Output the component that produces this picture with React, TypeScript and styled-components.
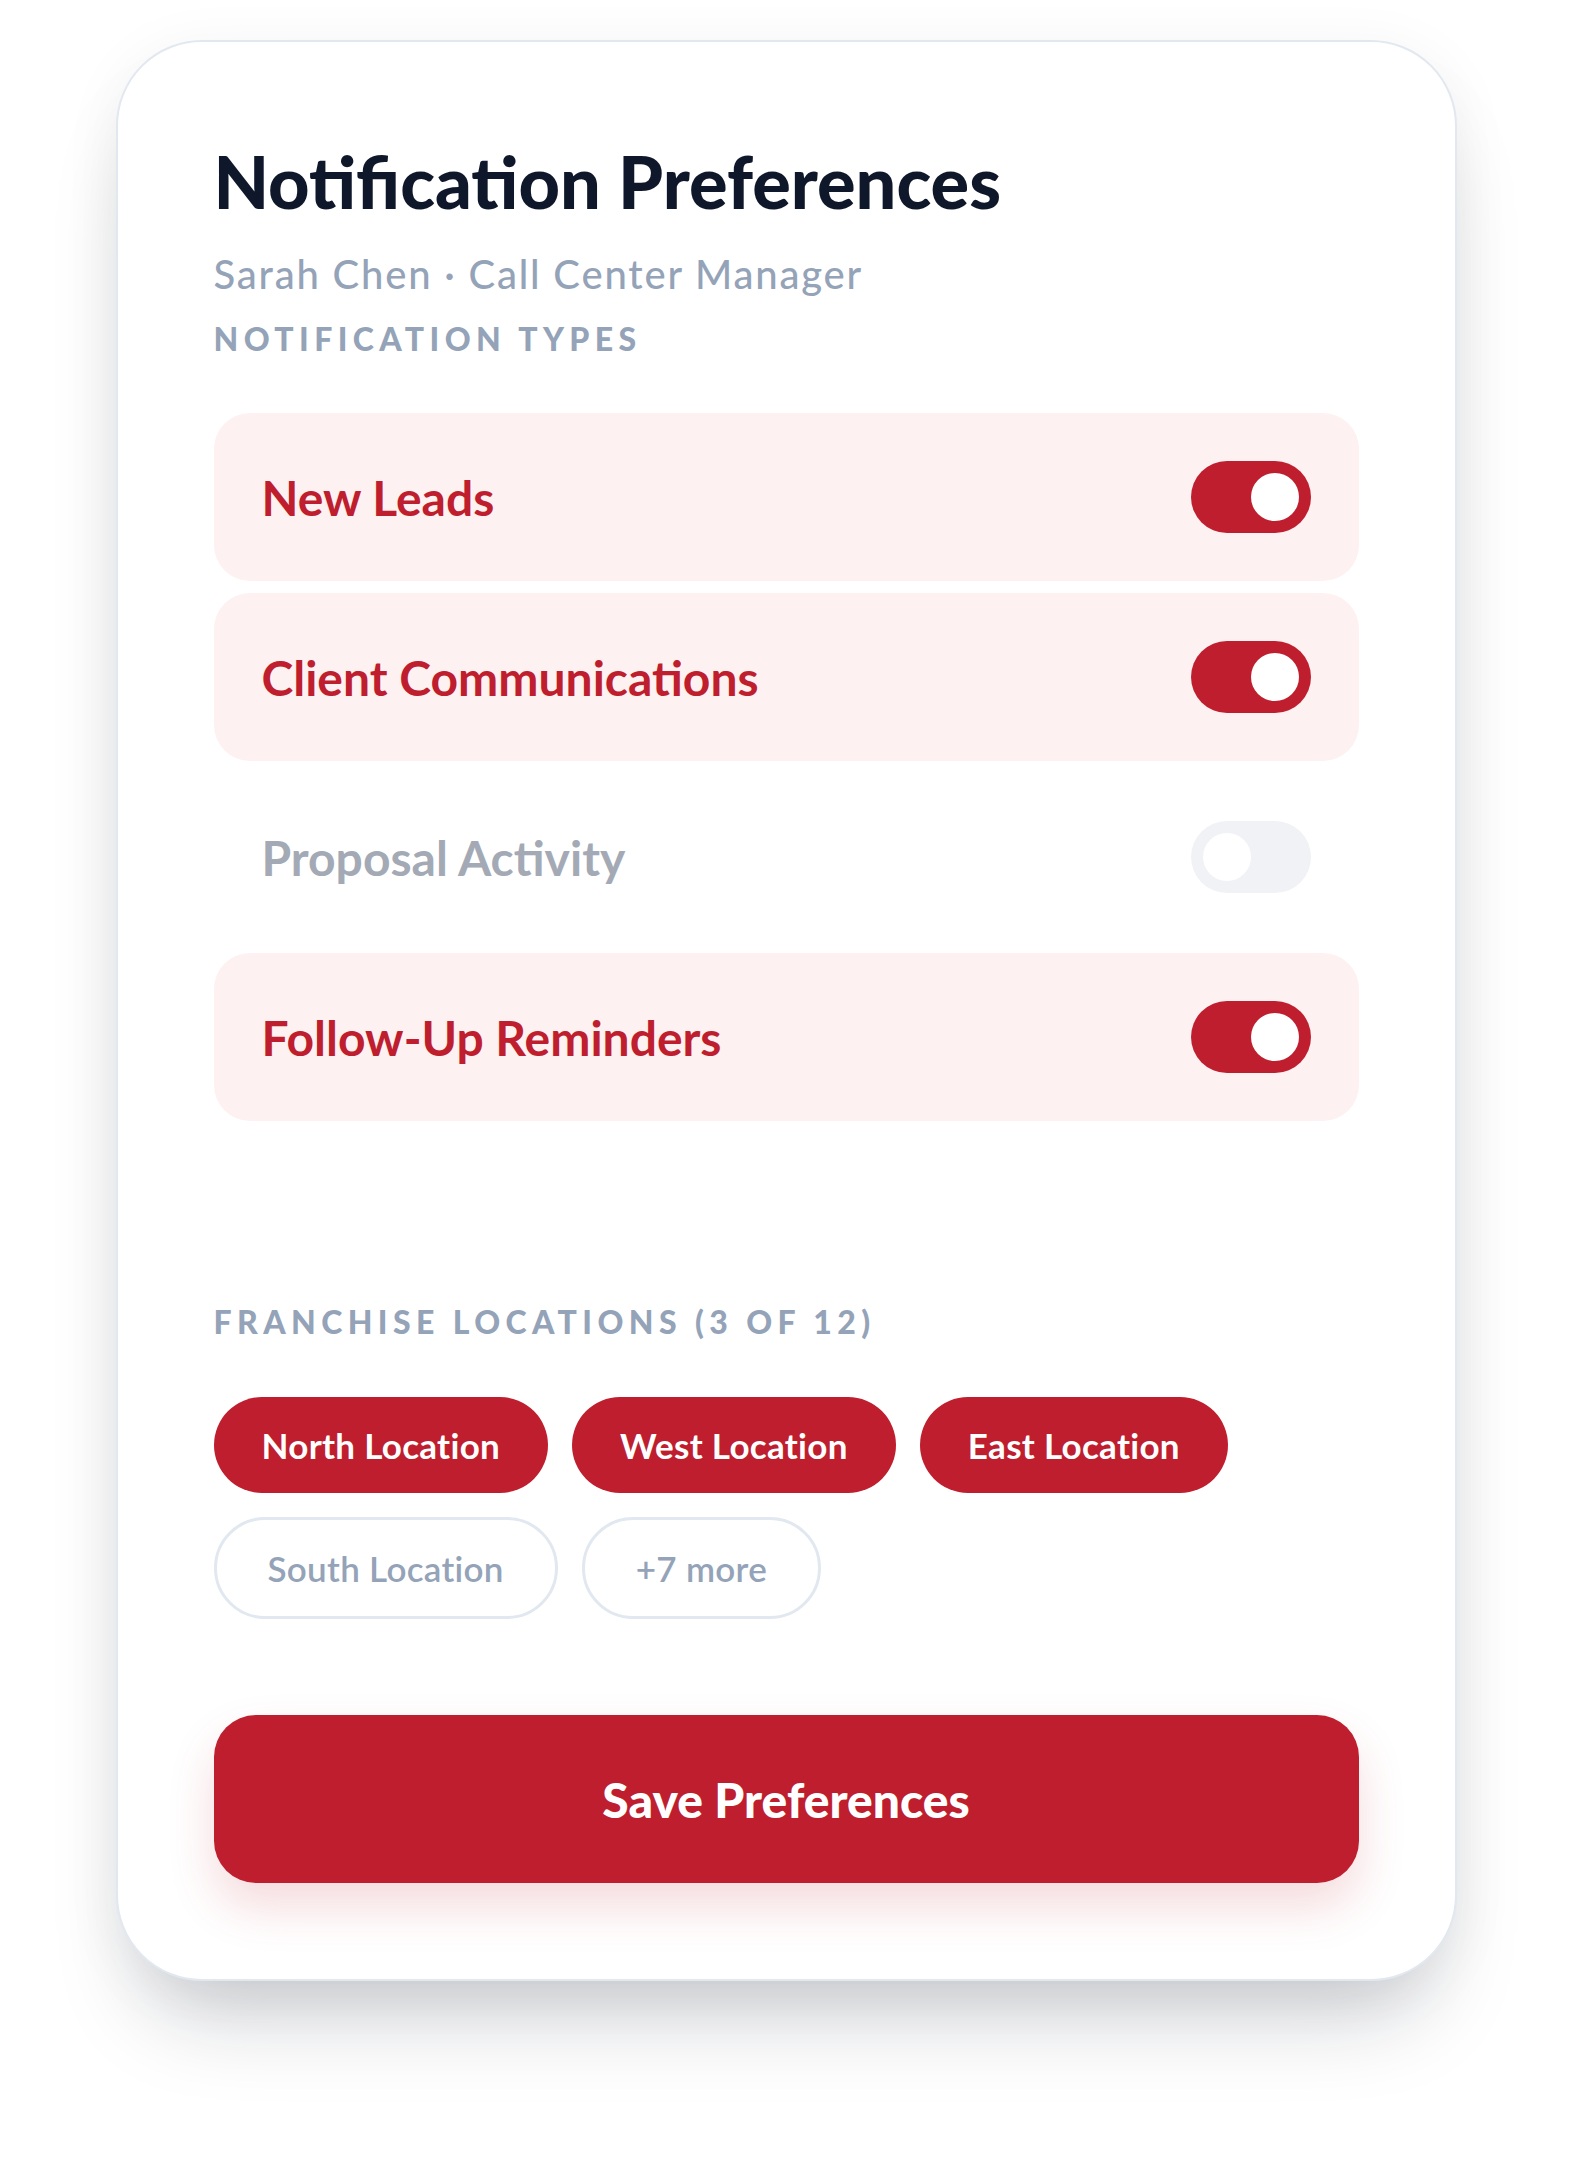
import React, { useState } from "react";
import styled, { createGlobalStyle } from "styled-components";

const GlobalStyle = createGlobalStyle`
  * {
    box-sizing: border-box;
  }
  body {
    margin: 0;
    background: #ffffff;
    font-family: "Lato", "Noto Sans", sans-serif;
  }
`;

const RED = "#be1e2d";
const SLATE = "#94a3b8";

const NOTIFICATION_TYPES = [
  { id: "leads", label: "New Leads", enabled: true },
  { id: "comms", label: "Client Communications", enabled: true },
  { id: "proposal", label: "Proposal Activity", enabled: false },
  { id: "followup", label: "Follow-Up Reminders", enabled: true },
];

const LOCATIONS = [
  { name: "North Location", selected: true },
  { name: "West Location", selected: true },
  { name: "East Location", selected: true },
  { name: "South Location", selected: false },
  { name: "+7 more", selected: false },
];

function App(): JSX.Element {
  const [types, setTypes] = useState(NOTIFICATION_TYPES);

  const toggleType = (id: string): void => {
    setTypes((prev) =>
      prev.map((t) => (t.id === id ? { ...t, enabled: !t.enabled } : t))
    );
  };

  const selectedCount = LOCATIONS.filter((l) => l.selected).length;

  return (
    <Page>
      <GlobalStyle />
      <Card>
        <Title>Notification Preferences</Title>
        <Subtitle>Sarah Chen · Call Center Manager</Subtitle>
        <SectionLabel>Notification Types</SectionLabel>
        <TypeList>
          {types.map((type) => (
            <TypeRow key={type.id} $active={type.enabled}>
              <TypeLabel $active={type.enabled}>{type.label}</TypeLabel>
              <Toggle
                type="button"
                role="switch"
                aria-checked={type.enabled}
                $on={type.enabled}
                onClick={() => toggleType(type.id)}
              >
                <Knob />
              </Toggle>
            </TypeRow>
          ))}
        </TypeList>
        <LocationsLabel>
          Franchise Locations ({selectedCount} of 12)
        </LocationsLabel>
        <ChipList>
          {LOCATIONS.map((loc) => (
            <Chip key={loc.name} type="button" $selected={loc.selected}>
              {loc.name}
            </Chip>
          ))}
        </ChipList>
        <SaveButton type="button">Save Preferences</SaveButton>
      </Card>
    </Page>
  );
}

export default App;

const Page = styled.div`
  min-height: 2174px;
  padding-top: 40px;
`;

const Card = styled.div`
  width: 1341px;
  margin: 0 auto;
  padding: 96px;
  display: flex;
  flex-direction: column;
  background: #ffffff;
  border: 2px solid #e2e8f0;
  border-radius: 86px;
  box-shadow: 0 60px 90px -30px rgba(15, 23, 42, 0.22),
    0 10px 60px rgba(15, 23, 42, 0.06);
`;

const Title = styled.h1`
  margin: 0;
  font-size: 72px;
  line-height: 86px;
  font-weight: 900;
  color: #0f172a;
  letter-spacing: 0;
`;

const Subtitle = styled.p`
  margin: 26px 0 0;
  font-size: 40px;
  line-height: 48px;
  font-weight: 500;
  letter-spacing: 1.8px;
  color: ${SLATE};
`;

const SectionLabel = styled.h2`
  margin: 22px 0 0;
  font-size: 32px;
  line-height: 38px;
  font-weight: 900;
  letter-spacing: 5.4px;
  text-transform: uppercase;
  color: ${SLATE};
`;

const LocationsLabel = styled(SectionLabel)`
  margin-top: 182px;
`;

const TypeList = styled.div`
  margin-top: 55px;
  display: flex;
  flex-direction: column;
  gap: 12px;
`;

const TypeRow = styled.div<{ $active: boolean }>`
  height: 168px;
  padding: 0 48px;
  display: flex;
  align-items: center;
  justify-content: space-between;
  border-radius: 36px;
  background: ${({ $active }) => ($active ? "#fef1f2" : "transparent")};
`;

const TypeLabel = styled.span<{ $active: boolean }>`
  font-size: 48px;
  font-weight: 700;
  color: ${({ $active }) => ($active ? RED : "#a3aab5")};
`;

const Toggle = styled.button<{ $on: boolean }>`
  width: 120px;
  height: 72px;
  padding: 12px;
  border: none;
  border-radius: 36px;
  display: flex;
  justify-content: ${({ $on }) => ($on ? "flex-end" : "flex-start")};
  background: ${({ $on }) => ($on ? RED : "#f1f2f6")};
  cursor: pointer;
`;

const Knob = styled.span`
  width: 48px;
  height: 48px;
  border-radius: 50%;
  background: #ffffff;
`;

const ChipList = styled.div`
  margin-top: 56px;
  display: flex;
  flex-wrap: wrap;
  gap: 24px;
`;

const Chip = styled.button<{ $selected: boolean }>`
  height: ${({ $selected }) => ($selected ? "96px" : "102px")};
  padding: ${({ $selected }) => ($selected ? "0 48px" : "0 51px")};
  border-radius: 52px;
  font-family: inherit;
  font-size: 35px;
  font-weight: ${({ $selected }) => ($selected ? 700 : 600)};
  letter-spacing: 0.3px;
  border: ${({ $selected }) => ($selected ? "none" : "3px solid #e2e8f0")};
  background: ${({ $selected }) => ($selected ? RED : "#ffffff")};
  color: ${({ $selected }) => ($selected ? "#ffffff" : SLATE)};
  cursor: pointer;
`;

const SaveButton = styled.button`
  margin-top: 96px;
  height: 168px;
  border: none;
  border-radius: 42px;
  background: ${RED};
  color: #ffffff;
  font-family: inherit;
  font-size: 48px;
  font-weight: 900;
  box-shadow: 0 24px 48px rgba(190, 30, 45, 0.16);
  cursor: pointer;
`;
